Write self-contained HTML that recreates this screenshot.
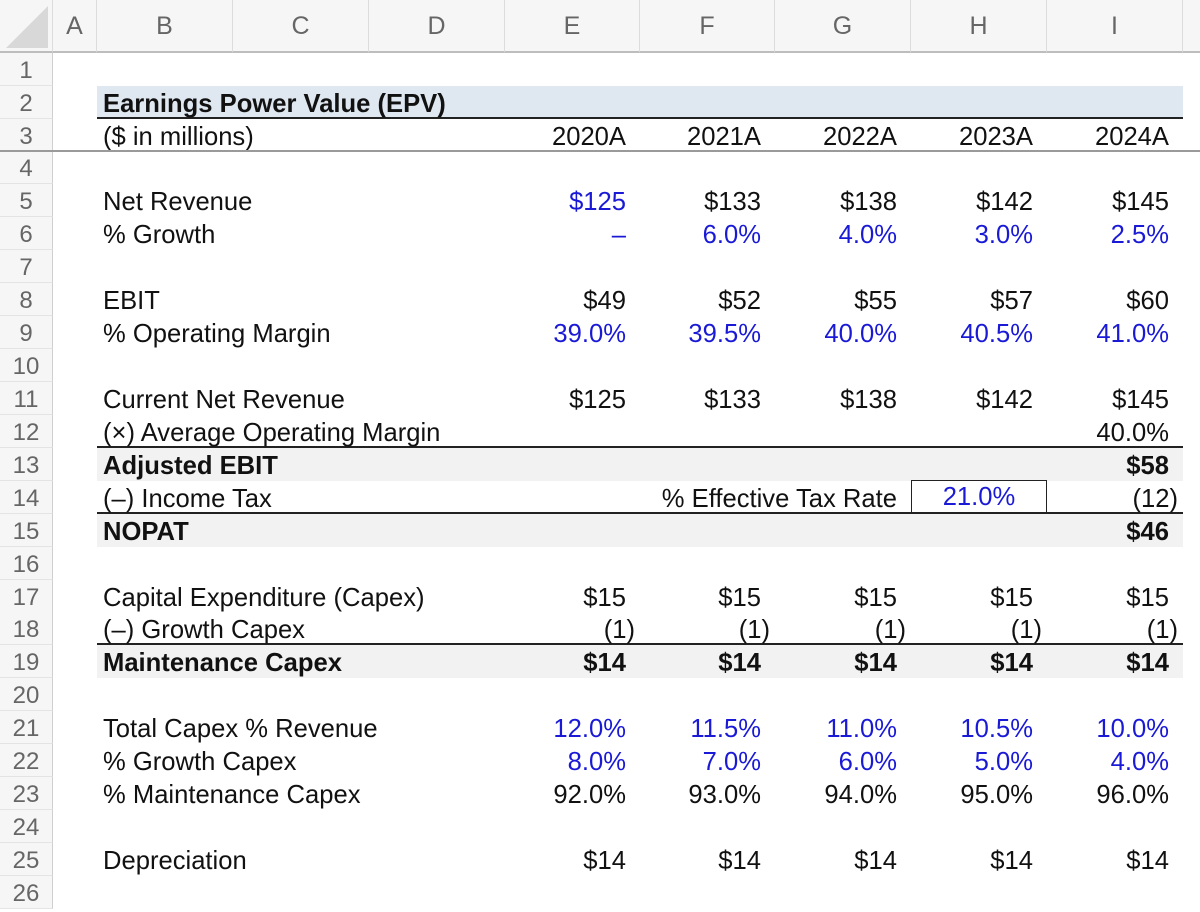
<!DOCTYPE html>
<html><head><style>
*{margin:0;padding:0;box-sizing:border-box}
body{width:1200px;height:912px;background:#fff;position:relative;overflow:hidden;font-family:"Liberation Sans",Arial,sans-serif;font-size:25.6px;color:#111}
.hdr{position:absolute;top:0;height:53px;background:#f6f6f6;border-right:1px solid #dcdcdc;border-bottom:2px solid #bdbdbd;color:#666;text-align:center;line-height:53px;font-size:25px}
.rn{position:absolute;left:0;width:53px;height:33px;background:#f6f6f6;border-right:1px solid #cfcfcf;border-bottom:1px solid #e4e4e4;color:#666;text-align:center;line-height:35px;font-size:24px}
.row{position:absolute;left:97px;width:1086px;height:33px;line-height:36px}
.c{position:absolute;top:0;height:33px;text-align:right;padding-right:14px;white-space:nowrap}
.l{position:absolute;left:6px;top:0;white-space:nowrap}
.b{font-weight:bold}
.bl{color:#1a1ad6}
.fill{background:#f2f2f2}
.p{margin-right:-9px}
</style></head><body>
<div class="hdr" style="left:0;width:53px"><svg width="53" height="53" style="position:absolute;left:0;top:0"><polygon points="48,6 48,48 6,48" fill="#d8d8d8"/></svg></div>
<div class="hdr" style="left:53px;width:44px">A</div>
<div class="hdr" style="left:97px;width:136px">B</div>
<div class="hdr" style="left:233px;width:136px">C</div>
<div class="hdr" style="left:369px;width:136px">D</div>
<div class="hdr" style="left:505px;width:135px">E</div>
<div class="hdr" style="left:640px;width:135px">F</div>
<div class="hdr" style="left:775px;width:136px">G</div>
<div class="hdr" style="left:911px;width:136px">H</div>
<div class="hdr" style="left:1047px;width:136px">I</div>
<div class="hdr" style="left:1183px;width:17px;border-right:none"></div>

<div class="rn" style="top:53px">1</div><div class="rn" style="top:86px">2</div><div class="rn" style="top:119px">3</div><div class="rn" style="top:151px">4</div><div class="rn" style="top:184px">5</div><div class="rn" style="top:217px">6</div><div class="rn" style="top:250px">7</div><div class="rn" style="top:283px">8</div><div class="rn" style="top:316px">9</div><div class="rn" style="top:349px">10</div><div class="rn" style="top:382px">11</div><div class="rn" style="top:415px">12</div><div class="rn" style="top:448px">13</div><div class="rn" style="top:481px">14</div><div class="rn" style="top:514px">15</div><div class="rn" style="top:547px">16</div><div class="rn" style="top:580px">17</div><div class="rn" style="top:612px">18</div><div class="rn" style="top:645px">19</div><div class="rn" style="top:678px">20</div><div class="rn" style="top:711px">21</div><div class="rn" style="top:744px">22</div><div class="rn" style="top:777px">23</div><div class="rn" style="top:810px">24</div><div class="rn" style="top:843px">25</div><div class="rn" style="top:876px">26</div>

<div class="row b" style="top:86px;background:#dfe7f0;border-bottom:2px solid #222"><span class="l">Earnings Power Value (EPV)</span></div>
<div class="row" style="top:119px"><span class="l">($ in millions)</span>
<span class="c" style="left:408px;width:135px">2020A</span><span class="c" style="left:543px;width:135px">2021A</span><span class="c" style="left:678px;width:136px">2022A</span><span class="c" style="left:814px;width:136px">2023A</span><span class="c" style="left:950px;width:136px">2024A</span></div>
<div style="position:absolute;left:0;top:150px;width:1200px;height:2px;background:#9a9a9a"></div>

<div class="row" style="top:184px"><span class="l">Net Revenue</span>
<span class="c bl" style="left:408px;width:135px">$125</span><span class="c" style="left:543px;width:135px">$133</span><span class="c" style="left:678px;width:136px">$138</span><span class="c" style="left:814px;width:136px">$142</span><span class="c" style="left:950px;width:136px">$145</span></div>
<div class="row" style="top:217px"><span class="l">% Growth</span>
<span class="c bl" style="left:408px;width:135px">–</span><span class="c bl" style="left:543px;width:135px">6.0%</span><span class="c bl" style="left:678px;width:136px">4.0%</span><span class="c bl" style="left:814px;width:136px">3.0%</span><span class="c bl" style="left:950px;width:136px">2.5%</span></div>

<div class="row" style="top:283px"><span class="l">EBIT</span>
<span class="c" style="left:408px;width:135px">$49</span><span class="c" style="left:543px;width:135px">$52</span><span class="c" style="left:678px;width:136px">$55</span><span class="c" style="left:814px;width:136px">$57</span><span class="c" style="left:950px;width:136px">$60</span></div>
<div class="row" style="top:316px"><span class="l">% Operating Margin</span>
<span class="c bl" style="left:408px;width:135px">39.0%</span><span class="c bl" style="left:543px;width:135px">39.5%</span><span class="c bl" style="left:678px;width:136px">40.0%</span><span class="c bl" style="left:814px;width:136px">40.5%</span><span class="c bl" style="left:950px;width:136px">41.0%</span></div>

<div class="row" style="top:382px"><span class="l">Current Net Revenue</span>
<span class="c" style="left:408px;width:135px">$125</span><span class="c" style="left:543px;width:135px">$133</span><span class="c" style="left:678px;width:136px">$138</span><span class="c" style="left:814px;width:136px">$142</span><span class="c" style="left:950px;width:136px">$145</span></div>
<div class="row" style="top:415px;border-bottom:2px solid #222"><span class="l">(×) Average Operating Margin</span>
<span class="c" style="left:950px;width:136px">40.0%</span></div>
<div class="row b fill" style="top:448px"><span class="l">Adjusted EBIT</span>
<span class="c" style="left:950px;width:136px">$58</span></div>
<div class="row" style="top:481px;border-bottom:2px solid #222"><span class="l">(–) Income Tax</span>
<span class="c" style="left:543px;width:271px">% Effective Tax Rate</span>
<span style="position:absolute;left:814px;width:136px;top:-1px;height:33px;border:1.5px solid #222;text-align:center;line-height:33px" class="bl">21.0%</span>
<span class="c" style="left:950px;width:136px"><span class="p">(12)</span></span></div>
<div class="row b fill" style="top:514px"><span class="l">NOPAT</span>
<span class="c" style="left:950px;width:136px">$46</span></div>

<div class="row" style="top:580px"><span class="l">Capital Expenditure (Capex)</span>
<span class="c" style="left:408px;width:135px">$15</span><span class="c" style="left:543px;width:135px">$15</span><span class="c" style="left:678px;width:136px">$15</span><span class="c" style="left:814px;width:136px">$15</span><span class="c" style="left:950px;width:136px">$15</span></div>
<div class="row" style="top:612px;border-bottom:2px solid #222"><span class="l">(–) Growth Capex</span>
<span class="c" style="left:408px;width:135px"><span class="p">(1)</span></span><span class="c" style="left:543px;width:135px"><span class="p">(1)</span></span><span class="c" style="left:678px;width:136px"><span class="p">(1)</span></span><span class="c" style="left:814px;width:136px"><span class="p">(1)</span></span><span class="c" style="left:950px;width:136px"><span class="p">(1)</span></span></div>
<div class="row b fill" style="top:645px"><span class="l">Maintenance Capex</span>
<span class="c" style="left:408px;width:135px">$14</span><span class="c" style="left:543px;width:135px">$14</span><span class="c" style="left:678px;width:136px">$14</span><span class="c" style="left:814px;width:136px">$14</span><span class="c" style="left:950px;width:136px">$14</span></div>

<div class="row" style="top:711px"><span class="l">Total Capex % Revenue</span>
<span class="c bl" style="left:408px;width:135px">12.0%</span><span class="c bl" style="left:543px;width:135px">11.5%</span><span class="c bl" style="left:678px;width:136px">11.0%</span><span class="c bl" style="left:814px;width:136px">10.5%</span><span class="c bl" style="left:950px;width:136px">10.0%</span></div>
<div class="row" style="top:744px"><span class="l">% Growth Capex</span>
<span class="c bl" style="left:408px;width:135px">8.0%</span><span class="c bl" style="left:543px;width:135px">7.0%</span><span class="c bl" style="left:678px;width:136px">6.0%</span><span class="c bl" style="left:814px;width:136px">5.0%</span><span class="c bl" style="left:950px;width:136px">4.0%</span></div>
<div class="row" style="top:777px"><span class="l">% Maintenance Capex</span>
<span class="c" style="left:408px;width:135px">92.0%</span><span class="c" style="left:543px;width:135px">93.0%</span><span class="c" style="left:678px;width:136px">94.0%</span><span class="c" style="left:814px;width:136px">95.0%</span><span class="c" style="left:950px;width:136px">96.0%</span></div>

<div class="row" style="top:843px"><span class="l">Depreciation</span>
<span class="c" style="left:408px;width:135px">$14</span><span class="c" style="left:543px;width:135px">$14</span><span class="c" style="left:678px;width:136px">$14</span><span class="c" style="left:814px;width:136px">$14</span><span class="c" style="left:950px;width:136px">$14</span></div>
</body></html>
